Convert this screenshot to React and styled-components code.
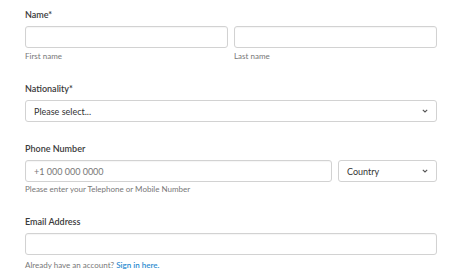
import React from 'react';
import styled, { createGlobalStyle } from 'styled-components';

const GlobalStyle = createGlobalStyle`
  html, body {
    margin: 0;
    padding: 0;
    background: #ffffff;
  }
  body {
    font-family: "Lato", "Liberation Sans", sans-serif;
    color: #333;
  }
`;

const Form = styled.form`
  width: 412px;
  padding: 9px 0 0 25px;
  display: flex;
  flex-direction: column;
`;

const Field = styled.div`
  display: flex;
  flex-direction: column;
  margin-bottom: ${(p) => p.$gap ?? 22}px;
`;

const Label = styled.label`
  font-size: 9px;
  line-height: 12px;
  font-weight: 600;
  color: #3a3a3a;
  margin-bottom: 5px;
`;

const Row = styled.div`
  display: flex;
  gap: 6px;
`;

const Col = styled.div`
  display: flex;
  flex-direction: column;
  flex: 1;
  min-width: 0;
`;

const Input = styled.input`
  box-sizing: border-box;
  width: 100%;
  height: 22px;
  border: 1px solid #d2d2d2;
  border-radius: 3px;
  padding: 0 8px;
  font-family: inherit;
  font-size: 9px;
  color: #333;
  background: #fff;
  box-shadow: inset 0 1px 1px rgba(0, 0, 0, 0.04);
  outline: none;

  &::placeholder {
    color: #777;
  }
`;

const SelectBox = styled.div`
  box-sizing: border-box;
  width: ${(p) => (p.$width ? `${p.$width}px` : '100%')};
  flex-shrink: 0;
  height: 22px;
  border: 1px solid #d2d2d2;
  border-radius: 3px;
  padding: 0 8px;
  display: flex;
  align-items: center;
  justify-content: space-between;
  font-size: 9px;
  color: #333;
  background: #fff;
`;

const Help = styled.div`
  font-size: 8px;
  line-height: 10px;
  color: #777;
  margin-top: ${(p) => p.$top ?? 3}px;
`;

const Link = styled.a`
  color: #2a8bd0;
  font-weight: 600;
  text-decoration: none;
`;

const Chevron = () => (
  <svg width="6" height="4" viewBox="0 0 6 4" fill="none">
    <path d="M0.8 0.8 L3 3 L5.2 0.8" stroke="#555" strokeWidth="1.1" />
  </svg>
);

export default function App() {
  return (
    <>
      <GlobalStyle />
      <Form>
        <Field>
          <Label>Name*</Label>
          <Row>
            <Col>
              <Input />
              <Help>First name</Help>
            </Col>
            <Col>
              <Input />
              <Help>Last name</Help>
            </Col>
          </Row>
        </Field>

        <Field $gap={21}>
          <Label>Nationality*</Label>
          <SelectBox>
            <span>Please select...</span>
            <Chevron />
          </SelectBox>
        </Field>

        <Field $gap={22}>
          <Label>Phone Number</Label>
          <Row>
            <Col>
              <Input placeholder="+1 000 000 0000" />
            </Col>
            <SelectBox $width={99}>
              <span>Country</span>
              <Chevron />
            </SelectBox>
          </Row>
          <Help $top={2}>Please enter your Telephone or Mobile Number</Help>
        </Field>

        <Field $gap={0}>
          <Label>Email Address</Label>
          <Input />
          <Help $top={5}>
            Already have an account? <Link href="#">Sign in here.</Link>
          </Help>
        </Field>
      </Form>
    </>
  );
}
